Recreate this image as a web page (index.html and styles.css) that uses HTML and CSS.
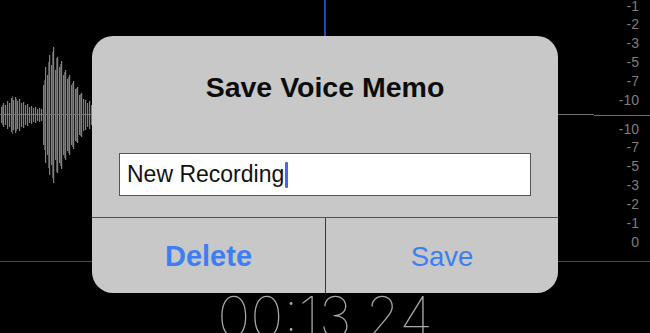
FILE: index.html
```html
<!DOCTYPE html>
<html>
<head>
<meta charset="utf-8">
<link rel="stylesheet" href="styles.css">
</head>
<body>
<div class="screen">
  <div class="track">
    <svg class="wave" width="100%" height="261">
      <line x1="0" y1="114.5" x2="100%" y2="114.5" stroke="#6e6e6e" stroke-width="1"/>
      <g fill="#555555">
        <rect x="2" y="105" width="1.2" height="20"/>
        <rect x="12" y="96" width="1.2" height="38"/>
        <rect x="16" y="99" width="1.2" height="32"/>
        <rect x="44" y="80" width="1.2" height="70"/>
        <rect x="48" y="62" width="1.2" height="106"/>
        <rect x="52" y="52" width="1.2" height="126"/>
        <rect x="56" y="58" width="1.2" height="114"/>
        <rect x="60" y="64" width="1.2" height="102"/>
        <rect x="64" y="72" width="1.2" height="86"/>
        <rect x="68" y="77" width="1.2" height="76"/>
        <rect x="72" y="83" width="1.2" height="64"/>
        <rect x="76" y="88" width="1.2" height="54"/>
        <rect x="80" y="94" width="1.2" height="42"/>
      </g>
      <g fill="#808080">
        <rect x="1" y="107" width="1.2" height="16"/>
        <rect x="3" y="103" width="1.2" height="24"/>
        <rect x="5" y="105" width="1.2" height="20"/>
        <rect x="7" y="101" width="1.2" height="28"/>
        <rect x="9" y="103" width="1.2" height="24"/>
        <rect x="11" y="98" width="1.2" height="34"/>
        <rect x="13" y="100" width="1.2" height="30"/>
        <rect x="15" y="97" width="1.2" height="36"/>
        <rect x="17" y="101" width="1.2" height="28"/>
        <rect x="19" y="99" width="1.2" height="32"/>
        <rect x="21" y="103" width="1.2" height="24"/>
        <rect x="23" y="102" width="1.2" height="26"/>
        <rect x="25" y="105" width="1.2" height="20"/>
        <rect x="27" y="104" width="1.2" height="22"/>
        <rect x="29" y="107" width="1.2" height="16"/>
        <rect x="31" y="106" width="1.2" height="18"/>
        <rect x="33" y="108" width="1.2" height="14"/>
        <rect x="35" y="107" width="1.2" height="16"/>
        <rect x="37" y="109" width="1.2" height="12"/>
        <rect x="39" y="108" width="1.2" height="14"/>
        <rect x="41" y="109" width="1.2" height="12"/>
        <rect x="43" y="85" width="1.2" height="60"/>
        <rect x="45" y="67" width="1.2" height="96"/>
        <rect x="47" y="75" width="1.2" height="80"/>
        <rect x="49" y="55" width="1.2" height="120"/>
        <rect x="51" y="65" width="1.2" height="100"/>
        <rect x="53" y="47" width="1.2" height="136"/>
        <rect x="55" y="70" width="1.2" height="90"/>
        <rect x="57" y="57" width="1.2" height="116"/>
        <rect x="59" y="67" width="1.2" height="96"/>
        <rect x="61" y="61" width="1.2" height="108"/>
        <rect x="63" y="75" width="1.2" height="80"/>
        <rect x="65" y="70" width="1.2" height="90"/>
        <rect x="67" y="79" width="1.2" height="72"/>
        <rect x="69" y="75" width="1.2" height="80"/>
        <rect x="71" y="85" width="1.2" height="60"/>
        <rect x="73" y="81" width="1.2" height="68"/>
        <rect x="75" y="89" width="1.2" height="52"/>
        <rect x="77" y="87" width="1.2" height="56"/>
        <rect x="79" y="95" width="1.2" height="40"/>
        <rect x="81" y="93" width="1.2" height="44"/>
        <rect x="83" y="99" width="1.2" height="32"/>
        <rect x="85" y="100" width="1.2" height="30"/>
        <rect x="87" y="103" width="1.2" height="24"/>
        <rect x="89" y="101" width="1.2" height="28"/>
        <rect x="91" y="105" width="1.2" height="20"/>
      </g>
    </svg>
    <div class="scale">
      <div class="scale-group top">
        <span>-1</span><span>-2</span><span>-3</span><span>-5</span><span>-7</span><span>-10</span>
      </div>
      <div class="scale-divider"></div>
      <div class="scale-group bottom">
        <span>-10</span><span>-7</span><span>-5</span><span>-3</span><span>-2</span><span>-1</span><span>0</span>
      </div>
    </div>
  </div>
  <div class="timer">00:13.24</div>
  <div class="playhead"></div>

  <div class="dialog">
    <div class="dialog-title">Save Voice Memo</div>
    <div class="field">
      <span class="field-text">New Recording</span><span class="caret"></span>
    </div>
    <div class="actions">
      <div class="action action-delete">Delete</div>
      <div class="action action-save">Save</div>
    </div>
  </div>
</div>
</body>
</html>
```

FILE: styles.css
```css
html, body {
  margin: 0;
  padding: 0;
  background: #000;
}

.screen {
  position: relative;
  width: 650px;
  height: 333px;
  overflow: hidden;
  background: #000;
  font-family: "Liberation Sans", Arial, sans-serif;
}

.track {
  height: 261px;
  border-bottom: 1px solid #4a4a4a;
  display: grid;
  grid-template-columns: 1fr 56px;
}

.wave {
  display: block;
}

.scale {
  display: flex;
  flex-direction: column;
  align-items: stretch;
  color: #7d7d7d;
  font-size: 14px;
}

.scale-group {
  display: flex;
  flex-direction: column;
  align-items: flex-end;
  padding-right: 11px;
}

.scale-group span {
  line-height: 18.9px;
  height: 18.9px;
}

.scale-group.top {
  margin-top: -3.5px;
  height: 118px;
}

.scale-divider {
  height: 1px;
  background: #6e6e6e;
}

.scale-group.bottom {
  padding-top: 4px;
}

.timer {
  text-align: center;
  font-family: "Inter", "Roboto", sans-serif;
  font-weight: 100;
  font-size: 56px;
  line-height: 56px;
  color: #a8a8a8;
  margin-top: 27px;
}

.playhead {
  position: absolute;
  left: 324px;
  top: 0;
  width: 1.5px;
  height: 40px;
  background: #1f48b8;
}

.dialog {
  position: absolute;
  left: 92px;
  top: 36px;
  width: 466px;
  height: 257px;
  border-radius: 21px;
  background: #c8c8c8;
  display: flex;
  flex-direction: column;
  overflow: hidden;
}

.dialog-title {
  margin-top: 37px;
  text-align: center;
  font-weight: bold;
  font-size: 28.5px;
  line-height: 28px;
  color: #0c0c0c;
}

.field {
  margin: 52px 27px 0;
  height: 41px;
  border: 1px solid #555;
  background: #fff;
  display: flex;
  align-items: center;
  padding-left: 7px;
}

.field-text {
  font-size: 23px;
  color: #111;
}

.caret {
  display: inline-block;
  width: 3px;
  height: 26px;
  margin-left: 1px;
  background: #4a66e6;
  border-radius: 1px;
}

.actions {
  margin-top: auto;
  height: 75px;
  border-top: 1px solid #4f4f4f;
  display: grid;
  grid-template-columns: 1fr 1fr;
}

.action {
  display: flex;
  align-items: center;
  justify-content: center;
  font-size: 29px;
  color: #3d7ef3;
  padding-top: 2px;
}

.action-delete {
  font-weight: bold;
}

.action-save {
  border-left: 1px solid #3a3a3a;
  font-size: 27.5px;
}
```
